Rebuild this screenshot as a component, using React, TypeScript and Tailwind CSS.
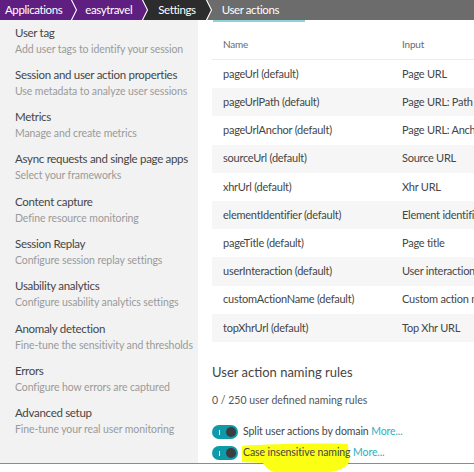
import React from "react";

const sections = [
  ["User tag", "Add user tags to identify your session"],
  ["Session and user action properties", "Use metadata to analyze user sessions"],
  ["Metrics", "Manage and create metrics"],
  ["Async requests and single page apps", "Select your frameworks"],
  ["Content capture", "Define resource monitoring"],
  ["Session Replay", "Configure session replay settings"],
  ["Usability analytics", "Configure usability analytics settings"],
  ["Anomaly detection", "Fine-tune the sensitivity and thresholds"],
  ["Errors", "Configure how errors are captured"],
  ["Advanced setup", "Fine-tune your real user monitoring"],
];

const rows = [
  ["pageUrl (default)", "Page URL"],
  ["pageUrlPath (default)", "Page URL: Path"],
  ["pageUrlAnchor (default)", "Page URL: Anchor"],
  ["sourceUrl (default)", "Source URL"],
  ["xhrUrl (default)", "Xhr URL"],
  ["elementIdentifier (default)", "Element identifier"],
  ["pageTitle (default)", "Page title"],
  ["userInteraction (default)", "User interaction"],
  ["customActionName (default)", "Custom action name"],
  ["topXhrUrl (default)", "Top Xhr URL"],
];

// chevron between two breadcrumb segments
function Chevron({ from, to }: { from: string; to: string }) {
  return (
    <svg width="10" height="20" viewBox="0 0 10 20" className="shrink-0 block">
      <rect width="10" height="20" fill={to} />
      <polygon points="0,0 3,0 8.5,10 3,20 0,20" fill={from} />
      <polyline points="3,-1 8.5,10 3,21" fill="none" stroke="#ffffff" strokeWidth="1.1" />
    </svg>
  );
}

function Toggle() {
  return (
    <span className="relative inline-block h-[14px] w-[26px] shrink-0 rounded-full bg-[#0e9aa8]">
      <span className="absolute left-[7px] top-[5px] h-[5px] w-px bg-white" />
      <span className="absolute right-[2px] top-[2px] h-[10px] w-[10px] rounded-full bg-[#3b3d40]" />
    </span>
  );
}

export default function App() {
  return (
    <div className="relative h-[472px] w-[474px] overflow-hidden bg-white font-['Lato',sans-serif] text-[#454646]">
      {/* breadcrumbs */}
      <div className="flex h-[20px] items-center text-[11.5px] leading-[20px] tracking-[-0.4px] text-white">
        <div className="h-full bg-[#5e1f80] pl-[5px] pr-[6px]">Applications</div>
        <Chevron from="#5e1f80" to="#5e1f80" />
        <div className="h-full bg-[#5e1f80] pl-[7px] pr-[7px]">easytravel</div>
        <Chevron from="#5e1f80" to="#2c2c2c" />
        <div className="h-full bg-[#2c2c2c] pl-[9px] pr-[7px]">Settings</div>
        <Chevron from="#2c2c2c" to="#6c6c6c" />
        <div className="h-full flex-1 bg-[#6c6c6c] pl-[9px]">User actions</div>
      </div>

      <div className="flex h-[444px] border-b border-[#8c8c8c]">
        {/* sidebar */}
        <div className="w-[198px] shrink-0 bg-[#f2f2f2] pl-[15px] pt-[3.5px]">
          {sections.map(([title, sub]) => (
            <div key={title} className="h-[42.3px]">
              <div className="whitespace-nowrap text-[11.5px] leading-[17px] tracking-[-0.3px] text-[#454646]">{title}</div>
              <div className="whitespace-nowrap text-[10.5px] leading-[17px] tracking-[-0.1px] text-[#9a9a9a]">{sub}</div>
            </div>
          ))}
        </div>

        {/* content */}
        <div className="relative min-w-0 flex-1 overflow-hidden pl-[14px]">
          <div className="ml-px h-[2px] w-[92px] bg-[#8fd3da]" />
          <div className="mt-[8px] w-[320px]">
            <div className="flex h-[30px] items-center border-b border-[#ececec] text-[10px] tracking-[-0.2px] text-[#6b6b6b]">
              <div className="w-[190px] pl-[11px]">Name</div>
              <div>Input</div>
            </div>
            {rows.map(([name, input], i) => (
              <div
                key={name}
                className={`flex h-[28.2px] items-center text-[11px] tracking-[-0.25px] text-[#454646] ${i % 2 === 1 ? "bg-[#f6f6f6]" : "bg-white"}`}
              >
                <div className="w-[190px] pl-[11px]">{name}</div>
                <div className="whitespace-nowrap">{input}</div>
              </div>
            ))}
          </div>

          <div className="mt-[20px] text-[13px] leading-[20px] text-[#454646]">User action naming rules</div>
          <div className="mt-[10px] text-[10.5px] leading-[16px] text-[#555]">0 / 250 user defined naming rules</div>

          <div className="relative z-10 mt-[13.5px] flex h-[21px] items-center gap-[5px] text-[10.5px] tracking-[-0.1px]">
            <Toggle />
            <span>
              Split user actions by domain <span className="text-[#2ab0c0]">More...</span>
            </span>
          </div>
          <div className="relative z-10 flex h-[21px] items-center gap-[5px] text-[10.5px] tracking-[-0.1px]">
            <Toggle />
            <span>
              Case insensitive naming <span className="text-[#2ab0c0]">More...</span>
            </span>
          </div>
        </div>
      </div>

      {/* highlighter mark */}
      <svg
        className="pointer-events-none absolute left-[238px] top-[440px]"
        width="115"
        height="32"
        viewBox="0 0 115 32"
      >
        <path
          d="M4 6 C30 4 80 3 110 4 L111 22 C108 28 100 31 92 32 L36 32 C30 30 27 26 25 23 L4 22 Z"
          fill="#fbff14"
        />
      </svg>
    </div>
  );
}
